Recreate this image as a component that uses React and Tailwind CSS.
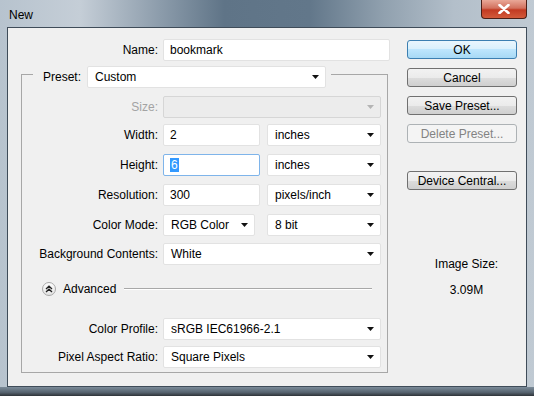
const font = { fontFamily: '"Liberation Sans", Arial, sans-serif' };

function Arrow({ disabled }) {
  return (
    <svg width="7" height="4" viewBox="0 0 7 4" className="shrink-0">
      <path d="M0 0H7L3.5 4Z" fill={disabled ? '#b4b4b4' : '#111'} />
    </svg>
  );
}

function Select({ w, value, disabled }) {
  return (
    <div className={`${w} h-[22px] flex items-center justify-between pl-[7px] pr-[6px] rounded-[2px] border ${disabled ? 'bg-[#ececec] border-[#d6d6d6]' : 'bg-white border-[#e2e2e2]'}`}>
      <span className="leading-none">{value}</span>
      <Arrow disabled={disabled} />
    </div>
  );
}

function Input({ w, children, focus }) {
  return (
    <div className={`${w} h-[22px] flex items-center pl-[6px] rounded-[2px] border bg-white ${focus ? 'border-[#7eb4ea]' : 'border-[#e2e2e2]'}`}>
      {children}
    </div>
  );
}

function Row({ label, mt, children, muted }) {
  return (
    <div className={`flex items-center gap-[5px] ${mt}`}>
      <div className={`w-[136px] text-right ${muted ? 'text-[#a3a3a3]' : 'text-black'}`}>{label}</div>
      {children}
    </div>
  );
}

function Button({ children, variant, mt }) {
  const styles = {
    ok: 'border-[#3c7fb1] bg-[linear-gradient(#eaf6fd_0%,#d9f0fc_50%,#bee6fd_50%,#a7d9f5_100%)] text-black',
    normal: 'border-[#707070] bg-[linear-gradient(#f2f2f2_0%,#ebebeb_50%,#dddddd_50%,#cfcfcf_100%)] text-black',
    disabled: 'border-[#adb2b5] bg-[#f4f4f4] text-[#838383]',
  };
  return (
    <div className={`w-[110px] h-[19px] flex items-center justify-center rounded-[3px] border ${styles[variant]} ${mt}`}>
      {children}
    </div>
  );
}

export default function App() {
  return (
    <div
      className="w-[534px] h-[396px] flex flex-col text-[12px] bg-[linear-gradient(90deg,#b7c3ce_0%,#c5ced7_15%,#8c9cab_30%,#5f7487_42%,#62778a_58%,#91a1af_72%,#b3bfca_85%,#c0cad3_100%)]"
      style={font}
    >
      {/* Title bar */}
      <div className="h-[27px] flex items-start justify-between pl-[9px] pr-[7px]">
        <span className="mt-[6px] text-black">New</span>
        <div className="w-[46px] h-[19px] flex items-center justify-center rounded-b-[4px] border border-t-0 border-[#4b1f17] bg-[linear-gradient(#e9a898_0%,#d2715e_45%,#c23a22_55%,#d35a3a_100%)]">
          <svg width="12" height="10" viewBox="0 0 12 10">
            <path d="M1.5 1L10.5 9M10.5 1L1.5 9" stroke="#fff" strokeWidth="2.6" strokeLinecap="round" />
          </svg>
        </div>
      </div>

      {/* Client area */}
      <div className="ml-[7px] w-[520px] h-[360px] border border-[#3f4c59] bg-[#f0f0f0] flex">
        {/* Left column */}
        <div className="w-[399px] flex flex-col">
          <div className="flex items-center gap-[5px] mt-[11px]">
            <div className="w-[150px] text-right">Name:</div>
            <Input w="w-[227px]">bookmark</Input>
          </div>

          <div className="ml-[13px] mt-[13px] w-[367px] h-[299px] border border-[#a7a7a7] flex flex-col">
            {/* Legend */}
            <div className="-mt-[9px] ml-[11px] w-fit flex items-center gap-[6px] pl-[10px] pr-[5px] bg-[#f0f0f0]">
              <span>Preset:</span>
              <Select w="w-[239px]" value="Custom" />
            </div>

            <Row label="Size:" mt="mt-[8px]" muted>
              <Select w="w-[218px]" value="" disabled />
            </Row>
            <Row label="Width:" mt="mt-[6px]">
              <Input w="w-[97px]">2</Input>
              <div className="ml-[2px]">
                <Select w="w-[114px]" value="inches" />
              </div>
            </Row>
            <Row label="Height:" mt="mt-[8px]">
              <Input w="w-[97px]" focus>
                <span className="bg-[#3399ff] text-white px-[1px] leading-[14px]">6</span>
              </Input>
              <div className="ml-[2px]">
                <Select w="w-[114px]" value="inches" />
              </div>
            </Row>
            <Row label="Resolution:" mt="mt-[8px]">
              <Input w="w-[97px]">300</Input>
              <div className="ml-[2px]">
                <Select w="w-[114px]" value="pixels/inch" />
              </div>
            </Row>
            <Row label="Color Mode:" mt="mt-[8px]">
              <Select w="w-[92px]" value="RGB Color" />
              <div className="ml-[7px]">
                <Select w="w-[114px]" value="8 bit" />
              </div>
            </Row>
            <Row label="Background Contents:" mt="mt-[7px]">
              <Select w="w-[218px]" value="White" />
            </Row>

            {/* Advanced */}
            <div className="mt-[14px] h-[20px] flex items-center pl-[20px]">
              <div className="w-[14px] h-[14px] rounded-full border border-[#a9a9a9] bg-[linear-gradient(#fdfdfd,#e3e3e3)] flex items-center justify-center">
                <svg width="8" height="8" viewBox="0 0 8 8">
                  <path d="M1 4L4 1.2L7 4M1 7L4 4.2L7 7" fill="none" stroke="#222" strokeWidth="1.3" />
                </svg>
              </div>
              <span className="ml-[7px]">Advanced</span>
              <div className="ml-[8px] w-[248px] h-[2px] border-t border-[#a8a8a8] border-b border-b-white" />
            </div>

            <Row label="Color Profile:" mt="mt-[19px]">
              <Select w="w-[218px]" value="sRGB IEC61966-2.1" />
            </Row>
            <Row label="Pixel Aspect Ratio:" mt="mt-[6px]">
              <Select w="w-[218px]" value="Square Pixels" />
            </Row>
          </div>
        </div>

        {/* Right column */}
        <div className="flex-1 flex flex-col">
          <Button variant="ok" mt="mt-[12px]">OK</Button>
          <Button variant="normal" mt="mt-[9px]">Cancel</Button>
          <Button variant="normal" mt="mt-[9px]">Save Preset...</Button>
          <Button variant="disabled" mt="mt-[9px]">Delete Preset...</Button>
          <Button variant="normal" mt="mt-[28px]">Device Central...</Button>
          <div className="mt-[65px] text-center text-black">Image Size:</div>
          <div className="mt-[8px] text-center text-black">3.09M</div>
        </div>
      </div>

      {/* Bottom frame */}
      <div className="flex-1 bg-[linear-gradient(#7b8b99,#56636f_60%,#2e3338)]" />
    </div>
  );
}
